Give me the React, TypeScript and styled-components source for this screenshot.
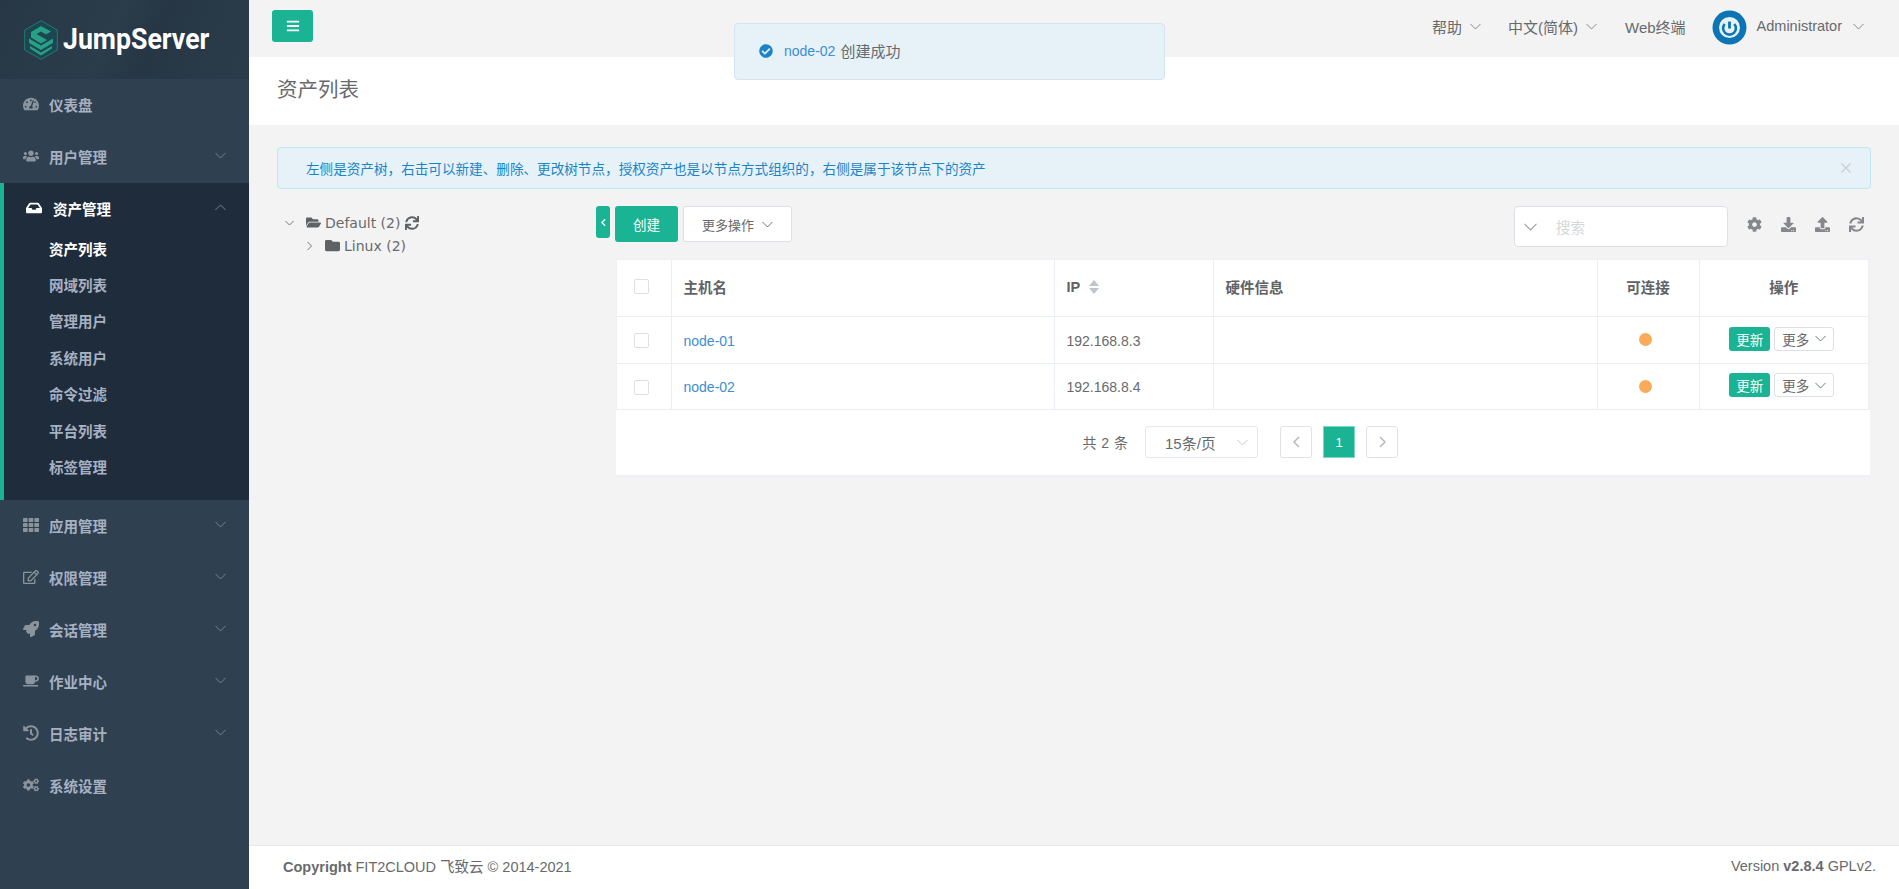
import React from 'react';
import styled, { createGlobalStyle } from 'styled-components';
import {
  FaTachometerAlt,
  FaUsers,
  FaInbox,
  FaTh,
  FaRegEdit,
  FaRocket,
  FaCoffee,
  FaHistory,
  FaCogs,
  FaBars,
  FaCheckCircle,
  FaFolderOpen,
  FaFolder,
  FaSync,
  FaCog,
  FaDownload,
  FaUpload,
} from 'react-icons/fa';

const SANS = `"Liberation Sans", "Noto Sans CJK SC", sans-serif`;
const GREEN = '#1ab394';

const GlobalStyle = createGlobalStyle`
  html, body { margin: 0; padding: 0; height: 100%; }
  body {
    font-family: ${SANS};
    font-size: 14px;
    color: #676a6c;
    background: #f3f3f4;
    overflow: hidden;
  }
  * { box-sizing: border-box; }
`;

const Shell = styled.div`
  display: flex;
  height: 889px;
  width: 1899px;
`;

/* ---- sidebar ---- */
const Sidebar = styled.aside`
  width: 249px;
  flex: none;
  background: #2f4050;
`;

const Brand = styled.div`
  height: 79px;
  display: flex;
  align-items: center;
  gap: 5px;
  padding: 0 0 0 24px;
  background: linear-gradient(115deg, #273746 0%, #2b3c4b 45%, #263644 60%, #2b3c4b 100%);
`;

const BrandName = styled.span`
  display: inline-block;
  font-family: "Roboto", sans-serif;
  font-weight: 700;
  font-size: 29px;
  color: #fff;
  transform: scaleX(0.92);
  transform-origin: left center;
  position: relative;
  top: -1px;
`;

const NavRow = styled.div<{ $active?: boolean }>`
  height: 52px;
  display: flex;
  align-items: center;
  padding: 0 23px 2px ${p => (p.$active ? '22px' : '23px')};
  color: ${p => (p.$active ? '#fff' : '#a7b1c2')};
  font-weight: 600;
  font-size: 14.5px;
`;

const NavIcon = styled.span<{ $active?: boolean }>`
  width: 16px;
  margin-right: ${p => (p.$active ? '11px' : '10px')};
  display: flex;
  justify-content: center;
  color: ${p => (p.$active ? '#fff' : '#8b939d')};
  font-size: 16px;
`;

const NavLabel = styled.span`
  flex: 1;
`;

const Caret = styled.svg<{ $size?: number }>`
  width: ${p => p.$size ?? 11}px;
  height: ${p => Math.round((p.$size ?? 11) * 0.6)}px;
  fill: none;
  stroke: currentColor;
  stroke-width: 1;
  flex: none;
`;

const SideCaret = styled(Caret)`
  color: #7f8a96;
  position: relative;
  top: -1px;
`;

const ActiveGroup = styled.div`
  height: 317px;
  background: #1f2c3c;
  border-left: 4px solid ${GREEN};
`;

const SubList = styled.div`
  margin-top: -5px;
  display: flex;
  flex-direction: column;
`;

const SubItem = styled.div<{ $active?: boolean }>`
  height: 36.4px;
  display: flex;
  align-items: center;
  padding-left: 45px;
  font-size: 14.5px;
  font-weight: 600;
  color: ${p => (p.$active ? '#fff' : '#a7b1c2')};
`;

/* ---- main column ---- */
const Main = styled.main`
  flex: 1;
  min-width: 0;
  display: flex;
  flex-direction: column;
  position: relative;
`;

const TopBar = styled.header`
  height: 57px;
  flex: none;
  display: flex;
  align-items: flex-start;
  justify-content: space-between;
  padding: 10px 35px 0 23px;
`;

const MenuButton = styled.button`
  width: 41px;
  height: 32px;
  border: none;
  border-radius: 3px;
  background: ${GREEN};
  color: #fff;
  font-size: 14px;
  display: flex;
  align-items: center;
  justify-content: center;
  padding: 0;
`;

const TopLinks = styled.nav`
  display: flex;
  align-items: center;
  height: 36px;
  margin-top: -1px;
  font-size: 15px;
  color: #676a6c;
`;

const TopLink = styled.span<{ $gap: number; $inner?: number }>`
  display: flex;
  align-items: center;
  gap: ${p => p.$inner ?? 8}px;
  margin-right: ${p => p.$gap}px;
  white-space: nowrap;
  position: relative;
  top: -1px;
`;

const UserName = styled.span`
  font-size: 14.5px;
`;

const TopCaret = styled(Caret)`
  color: #7d7f81;
`;

const Avatar = styled.svg`
  width: 35px;
  height: 35px;
  margin-right: 10px;
`;

const Toast = styled.div`
  position: absolute;
  left: 485px;
  top: 23px;
  width: 431px;
  height: 57px;
  display: flex;
  align-items: center;
  padding: 0 0 2px 24px;
  border: 1px solid #d3e4f2;
  border-radius: 4px;
  background: #e6f1f8;
  font-size: 14px;
`;

const ToastIcon = styled.span`
  display: flex;
  margin-right: 11px;
  font-size: 14px;
  color: #1c84c6;
`;

const ToastName = styled.span`
  color: #3d8ed4;
  margin-right: 5px;
`;

const ToastText = styled.span`
  font-size: 15px;
  color: #676a6c;
`;

const TitleBand = styled.div`
  height: 68px;
  flex: none;
  background: #fff;
  padding: 0 0 0 28px;
  display: flex;
  align-items: center;
`;

const Title = styled.h2`
  margin: 0;
  font-size: 20.5px;
  font-weight: 400;
  color: #676a6c;
  position: relative;
  top: -3px;
`;

const Content = styled.section`
  flex: 1;
  padding: 22px 28px 0 28px;
`;

const Notice = styled.div`
  height: 42px;
  display: flex;
  align-items: center;
  justify-content: space-between;
  padding: 0 19px 0 28px;
  border: 1px solid #bce8f1;
  border-radius: 4px;
  background: #e6f2f8;
  color: #1c84c6;
  font-size: 13.6px;
`;

const CloseMark = styled.svg`
  width: 10px;
  height: 10px;
  stroke: #c9cdd0;
  stroke-width: 1.2;
`;

const Split = styled.div`
  display: flex;
  margin-top: 17px;
`;

const TreePanel = styled.div`
  width: 319px;
  flex: none;
  padding: 5px 0 0 8px;
  font-family: "DejaVu Sans", sans-serif;
  font-size: 14px;
  color: #676a6c;
`;

const TreeRow = styled.div<{ $depth: number }>`
  height: 23px;
  display: flex;
  align-items: center;
  padding-left: ${p => p.$depth * 20}px;
  white-space: nowrap;
`;

const TreeArrow = styled(Caret)<{ $right?: boolean }>`
  width: 9px;
  height: 6px;
  margin-right: ${p => (p.$right ? '11px' : '12px')};
  color: #676a6c;
  stroke-width: 1.2;
  transform: ${p => (p.$right ? 'rotate(-90deg)' : 'none')};
`;

const TreeIcon = styled.span`
  display: flex;
  margin-right: 4px;
  font-size: 15px;
  color: #5f6265;
`;

const TreeRefresh = styled.span`
  display: flex;
  margin-left: 5px;
  font-size: 14px;
  color: #5f6265;
`;

const ListPanel = styled.div`
  flex: 1;
  min-width: 0;
`;

const Toolbar = styled.div`
  display: flex;
  align-items: flex-start;
  height: 53px;
`;

const SideToggle = styled.button`
  width: 14px;
  height: 32px;
  padding: 0;
  border: none;
  border-radius: 3px;
  background: ${GREEN};
  color: #fff;
  display: flex;
  align-items: center;
  justify-content: center;
  margin-right: 5px;
`;

const ToggleCaret = styled(Caret)`
  width: 5px;
  height: 9px;
  stroke-width: 1.6;
`;

const CreateButton = styled.button`
  width: 63px;
  height: 36px;
  border: none;
  border-radius: 3px;
  background: ${GREEN};
  color: #fff;
  font: inherit;
  font-size: 13.5px;
  margin-right: 5px;
`;

const MoreButton = styled.button`
  width: 109px;
  height: 36px;
  border: 1px solid #dcdfe6;
  border-radius: 3px;
  background: #fff;
  color: #676a6c;
  font: inherit;
  font-size: 13px;
  display: flex;
  align-items: center;
  justify-content: center;
  gap: 8px;
`;

const ToolSpacer = styled.div`
  flex: 1;
`;

const SearchBox = styled.div`
  width: 214px;
  height: 41px;
  border: 1px solid #dcdfe6;
  border-radius: 4px;
  background: #fff;
  display: flex;
  align-items: center;
  padding-left: 9px;
  color: #9a9da0;
`;

const SearchHint = styled.span`
  margin-left: 19px;
  font-size: 14.5px;
  color: #d5d7da;
`;

const ToolIcons = styled.div`
  display: flex;
  align-items: center;
  height: 36px;
  margin-left: 19px;
  margin-right: 7px;
  gap: 19px;
  font-size: 15px;
  color: #85878a;
`;

const Card = styled.div`
  margin-left: 20px;
  padding-top: 1px;
  background: #eef0f5;
  width: 1254px;
  padding-bottom: 2px;
`;

const Table = styled.table`
  width: 1251px;
  margin-left: 1px;
  background: #fff;
  border-collapse: collapse;
  table-layout: fixed;
  & tbody tr:first-child td { height: 47px; }
`;

const Th = styled.th<{ $align?: string; $width?: number }>`
  height: 56px;
  padding: 0 12px 2px;
  text-align: ${p => p.$align ?? 'left'};
  width: ${p => (p.$width ? `${p.$width}px` : 'auto')};
  font-size: 14.5px;
  font-weight: 700;
  color: #606266;
  border-right: 1px solid #ebeef5;
  border-bottom: 1px solid #ebeef5;
  &:last-child { border-right: none; }
`;

const Td = styled.td<{ $align?: string }>`
  height: 46px;
  padding: 2px 12px 0;
  text-align: ${p => p.$align ?? 'left'};
  font-size: 14px;
  color: #676a6c;
  border-right: 1px solid #ebeef5;
  border-bottom: 1px solid #ebeef5;
  &:last-child { border-right: none; }
`;

const Check = styled.span`
  display: block;
  width: 15px;
  height: 15px;
  margin-left: 5px;
  border: 1px solid #dcdfe6;
  border-radius: 2px;
  background: #fff;
`;

const NodeLink = styled.a`
  color: #3d8ed4;
`;

const HeadInner = styled.span`
  display: inline-flex;
  align-items: center;
  gap: 9px;
`;

const SortMarks = styled.svg`
  width: 10px;
  height: 14px;
  fill: #c0c4cc;
`;

const StatusDot = styled.span`
  display: inline-block;
  width: 13px;
  height: 13px;
  margin-right: 5px;
  border-radius: 50%;
  background: #f9ab59;
  vertical-align: middle;
  position: relative;
  top: -2px;
`;

const RowActions = styled.div`
  display: flex;
  justify-content: center;
  align-items: center;
  gap: 4px;
  padding-right: 4px;
  position: relative;
  top: -2px;
`;

const UpdateButton = styled.button`
  width: 41px;
  height: 24px;
  padding: 0;
  border: none;
  border-radius: 3px;
  background: ${GREEN};
  color: #fff;
  font: inherit;
  font-size: 13.5px;
`;

const RowMore = styled.button`
  width: 60px;
  height: 24px;
  padding: 0;
  border: 1px solid #dcdfe6;
  border-radius: 3px;
  background: #fff;
  color: #676a6c;
  font: inherit;
  font-size: 13.5px;
  display: flex;
  align-items: center;
  justify-content: center;
  gap: 6px;
`;

const Pager = styled.div`
  height: 65px;
  display: flex;
  align-items: center;
  justify-content: flex-end;
  padding: 0 472px 0 0;
  background: #fff;
  font-size: 14px;
`;

const Total = styled.span`
  margin-right: 17px;
  white-space: nowrap;
  word-spacing: 1px;
`;

const PageSize = styled.div`
  width: 113px;
  height: 32px;
  border: 1px solid #e4e7ed;
  border-radius: 3px;
  display: flex;
  align-items: center;
  padding: 0 9px 0 19px;
  justify-content: space-between;
  margin-right: 22px;
  color: #676a6c;
  font-size: 15px;
`;

const PageCaret = styled(Caret)`
  color: #c0c4cc;
`;

const PageButton = styled.button<{ $current?: boolean }>`
  width: 32px;
  height: 32px;
  padding: 0;
  margin-right: 11px;
  border: 1px solid ${p => (p.$current ? '#82d6c5' : '#dfe2ea')};
  border-radius: ${p => (p.$current ? '0' : '3px')};
  background: ${p => (p.$current ? GREEN : '#fff')};
  color: ${p => (p.$current ? '#fff' : '#b4b8c1')};
  font: inherit;
  font-size: 13px;
  display: flex;
  align-items: center;
  justify-content: center;
  &:last-child { margin-right: 0; }
`;

const PageArrow = styled(Caret)`
  width: 7px;
  height: 12px;
  stroke-width: 1.5;
`;

const Footer = styled.footer`
  height: 44px;
  flex: none;
  background: #fff;
  border-top: 1px solid #e7eaec;
  display: flex;
  align-items: center;
  justify-content: space-between;
  padding: 0 23px 4px 34px;
  font-size: 14.5px;
`;

const DownPath = () => <path d="M.5.7 6 6.2 11.5.7" />;

const Down = ({ size }: { size?: number }) => (
  <Caret $size={size} viewBox="0 0 12 7">
    <DownPath />
  </Caret>
);

const navTop = [
  { icon: <FaTachometerAlt />, label: '仪表盘', arrow: false },
  { icon: <FaUsers />, label: '用户管理', arrow: true },
];

const navBottom = [
  { icon: <FaTh />, label: '应用管理', arrow: true },
  { icon: <FaRegEdit />, label: '权限管理', arrow: true },
  { icon: <FaRocket />, label: '会话管理', arrow: true },
  { icon: <FaCoffee />, label: '作业中心', arrow: true },
  { icon: <FaHistory />, label: '日志审计', arrow: true },
  { icon: <FaCogs />, label: '系统设置', arrow: false },
];

const subItems = ['资产列表', '网域列表', '管理用户', '系统用户', '命令过滤', '平台列表', '标签管理'];

const hosts = [
  { name: 'node-01', ip: '192.168.8.3' },
  { name: 'node-02', ip: '192.168.8.4' },
];

const NavItem = ({ icon, label, arrow }: { icon: React.ReactNode; label: string; arrow: boolean }) => (
  <NavRow>
    <NavIcon>{icon}</NavIcon>
    <NavLabel>{label}</NavLabel>
    {arrow && (
      <SideCaret viewBox="0 0 12 7">
        <DownPath />
      </SideCaret>
    )}
  </NavRow>
);

const Logo = () => (
  <svg width="34" height="40" viewBox="0 0 34 40">
    <path d="M17 .7 33.300 10V30L17 39.300 .7 30V10Z" fill="#1d4650" stroke="#1b7f72" strokeWidth="1" />
    <path d="M17 6 27 11.500 22 14.500 17 11.500 12.500 14 23 20 17 23.500 7 17.500V12Z" fill="#27a085" />
    <path d="M5 18.500 17 25.500 29 18.500V23L17 30 5 23Z" fill="#27a085" />
    <path d="M6 26 17 32.500 28 26V28.500L17 35.500 6 28.500Z" fill="#27a085" />
  </svg>
);

export default function App() {
  return (
    <>
      <GlobalStyle />
      <Shell>
        <Sidebar>
          <Brand>
            <Logo />
            <BrandName>JumpServer</BrandName>
          </Brand>
          {navTop.map(item => (
            <NavItem key={item.label} {...item} />
          ))}
          <ActiveGroup>
            <NavRow $active>
              <NavIcon $active>
                <FaInbox />
              </NavIcon>
              <NavLabel>资产管理</NavLabel>
              <SideCaret viewBox="0 0 12 7">
                <path d="M.5 6.200 6 .7l5.500 5.500" />
              </SideCaret>
            </NavRow>
            <SubList>
              {subItems.map((s, i) => (
                <SubItem key={s} $active={i === 0}>
                  {s}
                </SubItem>
              ))}
            </SubList>
          </ActiveGroup>
          {navBottom.map(item => (
            <NavItem key={item.label} {...item} />
          ))}
        </Sidebar>

        <Main>
          <TopBar>
            <MenuButton>
              <FaBars />
            </MenuButton>
            <TopLinks>
              <TopLink $gap={27}>
                帮助
                <TopCaret viewBox="0 0 12 7">
                  <DownPath />
                </TopCaret>
              </TopLink>
              <TopLink $gap={28}>
                中文(简体)
                <TopCaret viewBox="0 0 12 7">
                  <DownPath />
                </TopCaret>
              </TopLink>
              <TopLink $gap={26}>Web终端</TopLink>
              <Avatar viewBox="0 0 35 35">
                <circle cx="17.500" cy="17.500" r="17" fill="#0d75b5" />
                <circle cx="17.500" cy="17.500" r="10.500" fill="#e8f1f6" />
                <path d="M12.700 14a6.400 6.400 0 1 0 9.600 0" fill="none" stroke="#0d75b5" strokeWidth="2.600" />
                <path d="M17.500 11.500v7" stroke="#0d75b5" strokeWidth="2.800" />
              </Avatar>
              <TopLink $gap={0} $inner={11}>
                <UserName>Administrator</UserName>
                <TopCaret viewBox="0 0 12 7">
                  <DownPath />
                </TopCaret>
              </TopLink>
            </TopLinks>
          </TopBar>

          <Toast>
            <ToastIcon>
              <FaCheckCircle />
            </ToastIcon>
            <ToastName>node-02</ToastName>
            <ToastText>创建成功</ToastText>
          </Toast>

          <TitleBand>
            <Title>资产列表</Title>
          </TitleBand>

          <Content>
            <Notice>
              <span>左侧是资产树，右击可以新建、删除、更改树节点，授权资产也是以节点方式组织的，右侧是属于该节点下的资产</span>
              <CloseMark viewBox="0 0 10 10">
                <path d="M.5.5l9 9M9.500.5l-9 9" />
              </CloseMark>
            </Notice>

            <Split>
              <TreePanel>
                <TreeRow $depth={0}>
                  <TreeArrow viewBox="0 0 12 7">
                    <DownPath />
                  </TreeArrow>
                  <TreeIcon>
                    <FaFolderOpen />
                  </TreeIcon>
                  Default (2)
                  <TreeRefresh>
                    <FaSync />
                  </TreeRefresh>
                </TreeRow>
                <TreeRow $depth={1}>
                  <TreeArrow $right viewBox="0 0 12 7">
                    <DownPath />
                  </TreeArrow>
                  <TreeIcon>
                    <FaFolder />
                  </TreeIcon>
                  Linux (2)
                </TreeRow>
              </TreePanel>

              <ListPanel>
                <Toolbar>
                  <SideToggle>
                    <ToggleCaret viewBox="0 0 6 10">
                      <path d="M5 1 1 5l4 4" />
                    </ToggleCaret>
                  </SideToggle>
                  <CreateButton>创建</CreateButton>
                  <MoreButton>
                    更多操作
                    <Down />
                  </MoreButton>
                  <ToolSpacer />
                  <SearchBox>
                    <Down size={13} />
                    <SearchHint>搜索</SearchHint>
                  </SearchBox>
                  <ToolIcons>
                    <FaCog />
                    <FaDownload />
                    <FaUpload />
                    <FaSync />
                  </ToolIcons>
                </Toolbar>

                <Card>
                  <Table>
                    <thead>
                      <tr>
                        <Th $width={54}>
                          <Check />
                        </Th>
                        <Th $width={383}>主机名</Th>
                        <Th $width={159}>
                          <HeadInner>
                            IP
                            <SortMarks viewBox="0 0 10 14">
                              <path d="M5 0 10 6H0ZM0 8H10L5 14Z" />
                            </SortMarks>
                          </HeadInner>
                        </Th>
                        <Th $width={384}>硬件信息</Th>
                        <Th $width={102} $align="center">
                          可连接
                        </Th>
                        <Th $align="center">操作</Th>
                      </tr>
                    </thead>
                    <tbody>
                      {hosts.map(h => (
                        <tr key={h.name}>
                          <Td>
                            <Check />
                          </Td>
                          <Td>
                            <NodeLink>{h.name}</NodeLink>
                          </Td>
                          <Td>{h.ip}</Td>
                          <Td />
                          <Td $align="center">
                            <StatusDot />
                          </Td>
                          <Td>
                            <RowActions>
                              <UpdateButton>更新</UpdateButton>
                              <RowMore>
                                更多
                                <Down />
                              </RowMore>
                            </RowActions>
                          </Td>
                        </tr>
                      ))}
                    </tbody>
                  </Table>
                  <Pager>
                    <Total>共 2 条</Total>
                    <PageSize>
                      15条/页
                      <PageCaret viewBox="0 0 12 7">
                        <DownPath />
                      </PageCaret>
                    </PageSize>
                    <PageButton>
                      <PageArrow viewBox="0 0 7 12">
                        <path d="M6 1 1 6l5 5" />
                      </PageArrow>
                    </PageButton>
                    <PageButton $current>1</PageButton>
                    <PageButton>
                      <PageArrow viewBox="0 0 7 12">
                        <path d="m1 1 5 5-5 5" />
                      </PageArrow>
                    </PageButton>
                  </Pager>
                </Card>
              </ListPanel>
            </Split>
          </Content>

          <Footer>
            <span>
              <strong>Copyright</strong> FIT2CLOUD 飞致云 © 2014-2021
            </span>
            <span>
              Version <strong>v2.8.4</strong> GPLv2.
            </span>
          </Footer>
        </Main>
      </Shell>
    </>
  );
}
